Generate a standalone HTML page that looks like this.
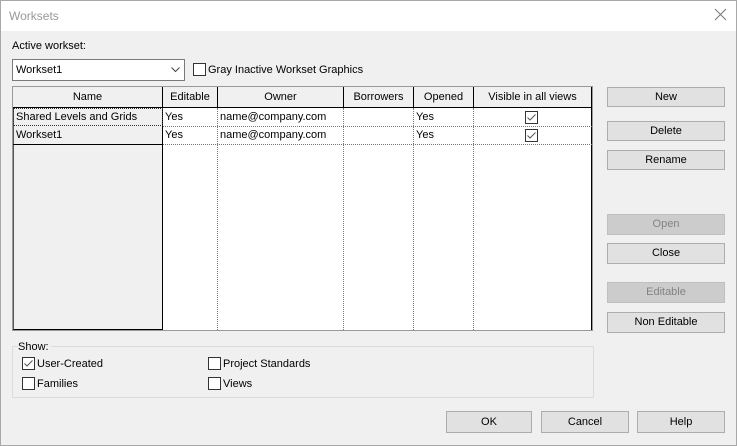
<!DOCTYPE html>
<html><head><style>
*{box-sizing:border-box;margin:0;padding:0}
body{width:737px;height:446px;overflow:hidden;background:#f0f0f0;font-family:"Liberation Sans",sans-serif;font-size:11px;color:#000;position:relative}
.a{position:absolute}
.win{left:0;top:0;width:737px;height:446px;border:1px solid #a8a8a8}
.title{left:1px;top:1px;width:735px;height:30px;background:#fff}
.btn{position:absolute;background:#e1e1e1;border:1px solid #adadad;text-align:center;line-height:18px;font-size:11px}
.dis{background:#cccccc;border-color:#bfbfbf;color:#838383}
.cb{position:absolute;width:13px;height:13px;border:1px solid #333;background:#fff}
.vl{position:absolute;top:108px;height:222px;border-left:1px dotted #777}
.hd{position:absolute;top:87px;height:21px;border-right:1px solid #000;border-bottom:1px solid #000;background:#f0f0f0;text-align:center;line-height:21px}
.t{position:absolute;white-space:nowrap}
</style></head><body>
<div class="a win"></div>
<div class="a title"></div>
<div class="t" style="left:9px;top:9px;color:#999;font-size:12px">Worksets</div>
<svg class="a" style="left:714px;top:8px" width="13" height="13"><path d="M1 1L12 12M12 1L1 12" stroke="#777" stroke-width="1"/></svg>

<div class="t" style="left:12px;top:40px">Active workset:</div>
<div class="a" style="left:12px;top:59px;width:173px;height:22px;border:1px solid #7a7a7a;background:#fff"></div>
<div class="t" style="left:16px;top:64px">Workset1</div>
<svg class="a" style="left:171px;top:67px" width="10" height="6"><path d="M0.5 0.5L4.5 4.5L8.5 0.5" stroke="#444" fill="none"/></svg>
<div class="cb" style="left:193px;top:63px"></div>
<div class="t" style="left:208px;top:64px">Gray Inactive Workset Graphics</div>

<div class="a" style="left:12px;top:86px;width:581px;height:245px;border:1px solid #999;background:#fff"></div>
<div class="a" style="left:13px;top:87px;width:150px;height:243px;background:#f0f0f0;border-right:1px solid #000;border-bottom:1px solid #000;border-left:1px solid #555"></div>
<div class="hd" style="left:13px;width:150px">Name</div>
<div class="hd" style="left:163px;width:55px">Editable</div>
<div class="hd" style="left:218px;width:126px">Owner</div>
<div class="hd" style="left:344px;width:70px">Borrowers</div>
<div class="hd" style="left:414px;width:60px">Opened</div>
<div class="hd" style="left:474px;width:118px">Visible in all views</div>
<div class="vl" style="left:217px"></div>
<div class="vl" style="left:343px"></div>
<div class="vl" style="left:413px"></div>
<div class="vl" style="left:473px"></div>
<div class="a" style="left:591px;top:108px;height:222px;border-left:1px solid #000"></div>
<div class="a" style="left:163px;top:126px;width:429px;border-top:1px dotted #777"></div>
<div class="a" style="left:163px;top:144px;width:429px;border-top:1px dotted #777"></div>
<div class="a" style="left:13px;top:108px;width:150px;height:18px;border:1px dotted #333"></div>
<div class="a" style="left:13px;top:144px;width:150px;border-top:1px solid #000"></div>
<div class="t" style="left:16px;top:111px">Shared Levels and Grids</div>
<div class="t" style="left:16px;top:129px">Workset1</div>
<div class="t" style="left:165px;top:111px">Yes</div>
<div class="t" style="left:165px;top:129px">Yes</div>
<div class="t" style="left:220px;top:111px">name@company.com</div>
<div class="t" style="left:220px;top:129px">name@company.com</div>
<div class="t" style="left:416px;top:111px">Yes</div>
<div class="t" style="left:416px;top:129px">Yes</div>
<svg class="a" style="left:525px;top:111px" width="13" height="13"><rect x="0.5" y="0.5" width="12" height="12" fill="#fff" stroke="#333"/><path d="M2.5 6.5L5 9L10.5 3.5" stroke="#555" fill="none"/></svg>
<svg class="a" style="left:525px;top:129px" width="13" height="13"><rect x="0.5" y="0.5" width="12" height="12" fill="#fff" stroke="#333"/><path d="M2.5 6.5L5 9L10.5 3.5" stroke="#555" fill="none"/></svg>

<div class="btn" style="left:607px;top:87px;width:118px;height:20px">New</div>
<div class="btn" style="left:607px;top:121px;width:118px;height:20px">Delete</div>
<div class="btn" style="left:607px;top:150px;width:118px;height:20px">Rename</div>
<div class="btn dis" style="left:607px;top:214px;width:118px;height:21px;line-height:19px">Open</div>
<div class="btn" style="left:607px;top:243px;width:118px;height:21px;line-height:19px">Close</div>
<div class="btn dis" style="left:607px;top:282px;width:118px;height:21px;line-height:19px">Editable</div>
<div class="btn" style="left:607px;top:312px;width:118px;height:21px;line-height:19px">Non Editable</div>

<div class="a" style="left:12px;top:346px;width:582px;height:52px;border:1px solid #dcdcdc"></div>
<div class="t" style="left:18px;top:341px;background:#f0f0f0;padding-right:2px">Show:</div>
<svg class="a" style="left:22px;top:357px" width="13" height="13"><rect x="0.5" y="0.5" width="12" height="12" fill="#fff" stroke="#333"/><path d="M2.5 6.5L5 9L10.5 3.5" stroke="#555" fill="none"/></svg>
<div class="t" style="left:37px;top:358px">User-Created</div>
<div class="cb" style="left:22px;top:377px"></div>
<div class="t" style="left:37px;top:378px">Families</div>
<div class="cb" style="left:208px;top:357px"></div>
<div class="t" style="left:223px;top:358px">Project Standards</div>
<div class="cb" style="left:208px;top:377px"></div>
<div class="t" style="left:223px;top:378px">Views</div>

<div class="btn" style="left:446px;top:411px;width:86px;height:22px;line-height:20px">OK</div>
<div class="btn" style="left:541px;top:411px;width:88px;height:22px;line-height:20px">Cancel</div>
<div class="btn" style="left:637px;top:411px;width:88px;height:22px;line-height:20px">Help</div>
</body></html>
